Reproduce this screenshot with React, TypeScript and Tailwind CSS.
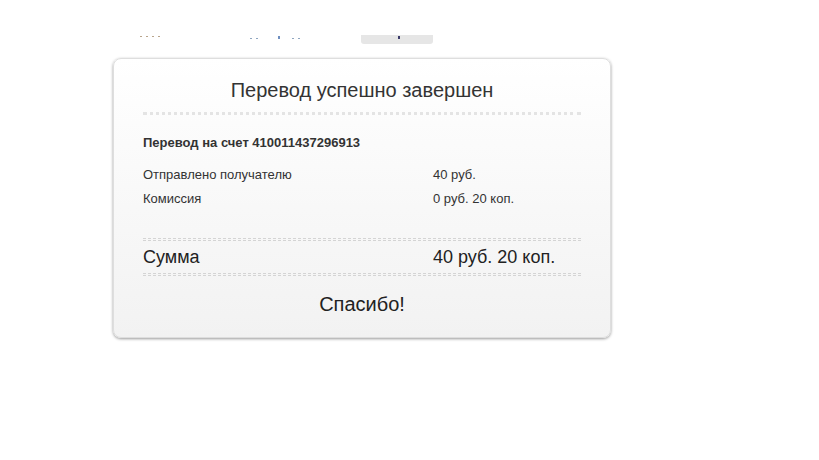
export default function App() {
  const rows = [
    { label: 'Отправлено получателю', value: '40 руб.' },
    { label: 'Комиссия', value: '0 руб. 20 коп.' },
  ];

  return (
    <div className="min-h-[460px] w-[819px] bg-white font-['Liberation_Sans',Arial,sans-serif] text-[#333]">
      {/* clipped top navigation remnants */}
      <div className="relative h-[58px]">
        <div className="absolute left-[140px] top-[36px] flex gap-[4px]">
          <span className="h-[1px] w-[2px] bg-[#b9a58c]" />
          <span className="h-[1px] w-[2px] bg-[#b9a58c]" />
          <span className="h-[1px] w-[2px] bg-[#b9a58c]" />
          <span className="h-[1px] w-[2px] bg-[#b9a58c]" />
        </div>
        <div className="absolute left-[250px] top-[36px] flex items-end">
          <span className="h-[1px] w-[2px] bg-[#8fa6c0]" />
          <span className="ml-[4px] h-[1px] w-[2px] bg-[#8fa6c0]" />
          <span className="ml-[20px] h-[3px] w-[2px] bg-[#6f8fc0]" />
          <span className="ml-[12px] h-[1px] w-[2px] bg-[#8fa6c0]" />
          <span className="ml-[4px] h-[1px] w-[2px] bg-[#8fa6c0]" />
        </div>
        <div className="absolute left-[361px] top-[35px] flex h-[9px] w-[72px] justify-center rounded-b-[3px] bg-[#e6e6e6]">
          <span className="ml-[4px] mt-[1px] h-[3px] w-[2px] bg-[#3b3b6b]" />
        </div>
      </div>

      <div className="ml-[113px] w-[498px] rounded-[8px] border border-[#dedede] bg-gradient-to-b from-white to-[#f2f2f2] px-[29px] pb-[21px] pt-[19px] shadow-[0_1px_3px_rgba(0,0,0,0.4)]">
        <h1 className="text-center text-[20px] leading-[24px] text-[#333]">Перевод успешно завершен</h1>
        <div className="mt-[10px] border-b-[3px] border-dotted border-[#e4e4e4]" />

        <div className="mt-[20px] text-[13px] font-bold leading-[16px] text-[#333]">
          Перевод на счет 410011437296913
        </div>

        <div className="mt-[12px] text-[13px] leading-[24px]">
          {rows.map((row) => (
            <div key={row.label} className="flex">
              <div className="w-[290px]">{row.label}</div>
              <div>{row.value}</div>
            </div>
          ))}
        </div>

        <div className="mt-[27px] h-[3px] border-y border-dashed border-[#d4d4d4]" />
        <div className="mt-[5px] flex text-[18px] leading-[22px] text-[#222]">
          <div className="w-[290px]">Сумма</div>
          <div>40 руб. 20 коп.</div>
        </div>
        <div className="mt-[5px] h-[3px] border-y border-dashed border-[#d4d4d4]" />

        <div className="mt-[16px] text-center text-[20px] leading-[24px] text-[#222]">Спасибо!</div>
      </div>
    </div>
  );
}
